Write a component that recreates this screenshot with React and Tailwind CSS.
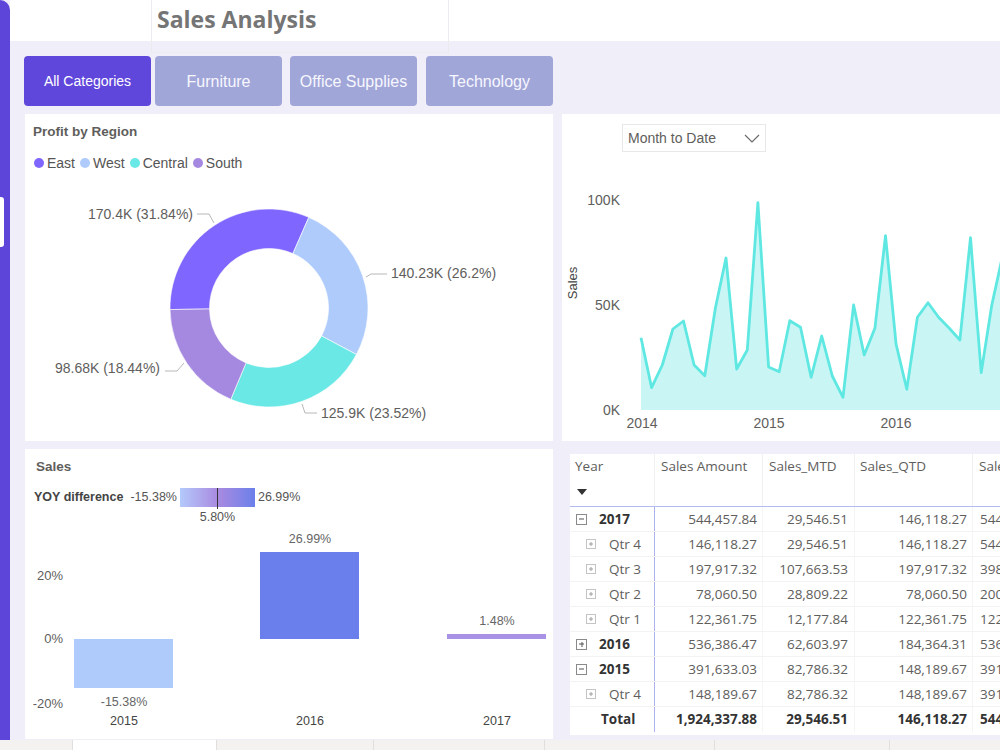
import React from 'react';

// --- chart data (page coordinates are used in every viewBox) ---

const donut = { cx: 269, cy: 308, R: 99, r: 59.5 };

const slices = [
  { name: 'East', from: -90.9, to: 23.7, color: '#7f66fe' },
  { name: 'West', from: 23.7, to: 118, color: '#aecbfc' },
  { name: 'Central', from: 118, to: 202.7, color: '#69e8e6' },
  { name: 'South', from: 202.7, to: 269.1, color: '#a589e0' },
];

const pt = (a, rad) => {
  const t = (a * Math.PI) / 180;
  return [donut.cx + rad * Math.sin(t), donut.cy - rad * Math.cos(t)];
};

const arcPath = (from, to) => {
  const large = to - from > 180 ? 1 : 0;
  const [x1, y1] = pt(from, donut.R);
  const [x2, y2] = pt(to, donut.R);
  const [x3, y3] = pt(to, donut.r);
  const [x4, y4] = pt(from, donut.r);
  return `M${x1} ${y1} A${donut.R} ${donut.R} 0 ${large} 1 ${x2} ${y2} L${x3} ${y3} A${donut.r} ${donut.r} 0 ${large} 0 ${x4} ${y4} Z`;
};

const salesLine = [
  337.7, 387.7, 365, 329, 321, 365, 375.7, 308, 258, 369, 350, 202.7, 367, 371.7, 320.7, 327.3,
  377.3, 336, 376, 397.3, 305, 355, 328.3, 235.7, 344.3, 389.3, 317.3, 302.7, 317.3, 328.3, 340,
  237.7, 372.7, 305, 256.7, 215,
];

const linePts = salesLine.map((y, i) => [641 + i * 10.63, y]);
const lineD = linePts.map(([x, y], i) => `${i ? 'L' : 'M'}${x.toFixed(1)} ${y}`).join(' ');
const areaD = `${lineD} L${linePts[linePts.length - 1][0].toFixed(1)} 410 L641 410 Z`;

const tableRows = [
  { label: '2017', level: 0, open: true, v: ['544,457.84', '29,546.51', '146,118.27', '544,457.84'] },
  { label: 'Qtr 4', level: 1, v: ['146,118.27', '29,546.51', '146,118.27', '544,457.84'] },
  { label: 'Qtr 3', level: 1, v: ['197,917.32', '107,663.53', '197,917.32', '398,339.57'] },
  { label: 'Qtr 2', level: 1, v: ['78,060.50', '28,809.22', '78,060.50', '200,422.25'] },
  { label: 'Qtr 1', level: 1, v: ['122,361.75', '12,177.84', '122,361.75', '122,361.75'] },
  { label: '2016', level: 0, open: false, v: ['536,386.47', '62,603.97', '184,364.31', '536,386.47'] },
  { label: '2015', level: 0, open: true, v: ['391,633.03', '82,786.32', '148,189.67', '391,633.03'] },
  { label: 'Qtr 4', level: 1, v: ['148,189.67', '82,786.32', '148,189.67', '391,633.03'] },
];

function ExpandBox({ open, small }) {
  return (
    <span
      className={`relative inline-block shrink-0 border ${small ? 'w-[10px] h-[10px] border-[#c4c4c4]' : 'w-[11px] h-[11px] border-[#8a8a8a]'}`}
    >
      <span className={`absolute left-[2px] right-[2px] top-1/2 h-px -translate-y-1/2 ${small ? 'bg-[#a0a0a0]' : 'bg-[#555]'}`} />
      {!open && (
        <span className={`absolute top-[2px] bottom-[2px] left-1/2 w-px -translate-x-1/2 ${small ? 'bg-[#a0a0a0]' : 'bg-[#555]'}`} />
      )}
    </span>
  );
}

function ProfitByRegion() {
  return (
    <div className="bg-white flex flex-col h-[327px]">
      <div className="pt-[10px] pl-[8px] text-[13.5px] font-bold text-[#605e5c] leading-[16px]">Profit by Region</div>
      <div className="flex items-center gap-[5px] pl-[9px] mt-[15px] text-[14px] text-[#555] leading-[16px]">
        {slices.map((s) => (
          <span key={s.name} className="flex items-center gap-[3px]">
            <span className="w-[10px] h-[10px] rounded-full" style={{ background: s.color }} />
            {s.name}
          </span>
        ))}
      </div>
      <svg className="mt-auto" width="528" height="261" viewBox="25 180 528 261">
        {slices.map((s) => (
          <path key={s.name} d={arcPath(s.from, s.to)} fill={s.color} stroke="#fff" strokeWidth="0.6" />
        ))}
        <g fill="none" stroke="#b8b8b8" strokeWidth="1">
          <polyline points="197,214 209,214 214,223" />
          <polyline points="366,277 371,274 387,274" />
          <polyline points="165,371 177,371 184,363" />
          <polyline points="302,404 305,413 317,413" />
        </g>
        <g fill="#605e5c" fontSize="14">
          <text x="193" y="219" textAnchor="end">170.4K (31.84%)</text>
          <text x="391" y="278">140.23K (26.2%)</text>
          <text x="160" y="373" textAnchor="end">98.68K (18.44%)</text>
          <text x="321" y="418">125.9K (23.52%)</text>
        </g>
      </svg>
    </div>
  );
}

function SalesTrend() {
  return (
    <div className="bg-white flex flex-col h-[327px] overflow-hidden">
      <div className="pt-[10px] pl-[60px]">
        <div className="w-[144px] h-[28px] border border-[#e8e8e8] flex items-center justify-between pl-[5px] pr-[5px] text-[14px] text-[#605e5c]">
          <span>Month to Date</span>
          <svg width="16" height="9" viewBox="0 0 16 9">
            <path d="M1 1 L8 8 L15 1" fill="none" stroke="#666" strokeWidth="1.1" />
          </svg>
        </div>
      </div>
      <svg className="mt-auto shrink-0" width="438" height="285" viewBox="562 156 438 285">
        <path d={areaD} fill="#c9f6f5" />
        <path d={lineD} fill="none" stroke="#5fe8e2" strokeWidth="2.8" strokeLinejoin="round" />
        <g fill="#605e5c" fontSize="14" textAnchor="end">
          <text x="620" y="205">100K</text>
          <text x="620" y="310">50K</text>
          <text x="620" y="415">0K</text>
        </g>
        <g fill="#605e5c" fontSize="14" textAnchor="middle">
          <text x="642" y="428">2014</text>
          <text x="769" y="428">2015</text>
          <text x="896" y="428">2016</text>
        </g>
        <text x="577" y="283" fontSize="13" fill="#444" textAnchor="middle" transform="rotate(-90 577 283)">Sales</text>
      </svg>
    </div>
  );
}

function YoySales() {
  return (
    <div className="bg-white flex flex-col h-[290px]">
      <div className="pt-[10px] pl-[11px] text-[13.5px] font-bold text-[#605e5c] leading-[16px]">Sales</div>
      <div className="flex items-start pl-[9px] mt-[13px] text-[12.5px] leading-[19px] text-[#444]">
        <span className="font-bold">YOY difference</span>
        <span className="ml-[7px] text-[#555]">-15.38%</span>
        <div className="ml-[3px] flex flex-col items-center">
          <div className="relative w-[75px] h-[19px] bg-linear-to-r from-[#b3cafc] via-[#a98ae0] to-[#6a80ea]">
            <span className="absolute left-[37px] top-0 h-[21px] w-px bg-[#333]" />
          </div>
          <span className="text-[#555] leading-[16px] mt-[2px]">5.80%</span>
        </div>
        <span className="ml-[3px] text-[#555]">26.99%</span>
      </div>
      <svg className="mt-auto shrink-0" width="527" height="214" viewBox="25 525 527 214">
        <rect x="74" y="639" width="99" height="49" fill="#aecbfc" />
        <rect x="260" y="552" width="99" height="87" fill="#6a7fec" />
        <rect x="447" y="634" width="99" height="5" fill="#a992e6" />
        <g fill="#605e5c" fontSize="13" textAnchor="end">
          <text x="63" y="580">20%</text>
          <text x="63" y="643">0%</text>
          <text x="63" y="708">-20%</text>
        </g>
        <g fill="#666" fontSize="12.5" textAnchor="middle">
          <text x="124" y="706">-15.38%</text>
          <text x="310" y="543">26.99%</text>
          <text x="497" y="625">1.48%</text>
        </g>
        <g fill="#444" fontSize="12.5" textAnchor="middle">
          <text x="124" y="725">2015</text>
          <text x="310" y="725">2016</text>
          <text x="497" y="725">2017</text>
        </g>
      </svg>
    </div>
  );
}

function SalesTable() {
  const cols = ['w-[108px]', 'w-[92px]', 'w-[118px]'];
  const pads = ['pr-[5px]', 'pr-[6px]', 'pr-[5px]'];
  return (
    <div className="ml-[8px] mt-[5px] h-[281px] bg-white overflow-hidden font-['Open_Sans',sans-serif] text-[13.5px] text-[#605e5c]">
      <div className="flex h-[53px] border-b border-[#b3bcef]">
        <div className="w-[85px] shrink-0 pl-[5px] pt-[2px] flex flex-col border-r border-[#f0f0f0]">
          <span className="leading-[20px]">Year</span>
          <svg className="mt-[13px] ml-[2px]" width="10" height="6" viewBox="0 0 10 6">
            <path d="M0 0 L10 0 L5 6 Z" fill="#333" />
          </svg>
        </div>
        <div className="w-[108px] shrink-0 pl-[6px] pt-[2px] leading-[20px] border-r border-[#f0f0f0]">Sales Amount</div>
        <div className="w-[92px] shrink-0 pl-[6px] pt-[2px] leading-[20px] border-r border-[#f0f0f0]">Sales_MTD</div>
        <div className="w-[118px] shrink-0 pl-[5px] pt-[2px] leading-[20px] border-r border-[#f0f0f0]">Sales_QTD</div>
        <div className="pl-[6px] pt-[2px] leading-[20px] whitespace-nowrap">Sales_YTD</div>
      </div>
      {[...tableRows, { label: 'Total', total: true, v: ['1,924,337.88', '29,546.51', '146,118.27', '544,457.84'] }].map((row, i) => (
        <div key={i} className={`flex h-[25px] items-center ${row.total ? '' : 'border-b border-[#f3f3f3]'}`}>
          <div className="w-[85px] shrink-0 h-full flex items-center border-r border-[#aab3ee]">
            {row.total ? (
              <span className="pl-[31px] font-bold text-[#333]">Total</span>
            ) : row.level === 0 ? (
              <span className="flex items-center pl-[6px] gap-[12px] font-bold text-[#333]">
                <ExpandBox open={row.open} />
                {row.label}
              </span>
            ) : (
              <span className="flex items-center pl-[16px] gap-[13px]">
                <ExpandBox small />
                {row.label}
              </span>
            )}
          </div>
          {row.v.slice(0, 3).map((val, j) => (
            <div
              key={j}
              className={`${cols[j]} ${pads[j]} shrink-0 h-full flex items-center justify-end border-r border-[#f5f5f5] ${row.total ? 'font-bold text-[#333]' : ''}`}
            >
              {val}
            </div>
          ))}
          <div className={`pl-[7px] whitespace-nowrap ${row.total ? 'font-bold text-[#333]' : ''}`}>{row.v[3]}</div>
        </div>
      ))}
    </div>
  );
}

export default function App() {
  const tabs = [
    { name: 'All Categories', cls: 'ml-[14px] bg-[#5f47dc] text-[14px] text-white' },
    { name: 'Furniture', cls: 'ml-[4px] bg-[#a1a6d8] text-[16px] text-[#f7f7ff]' },
    { name: 'Office Supplies', cls: 'ml-[8px] bg-[#a1a6d8] text-[16px] text-[#f7f7ff]' },
    { name: 'Technology', cls: 'ml-[9px] bg-[#a1a6d8] text-[16px] text-[#f7f7ff]' },
  ];

  return (
    <div className="w-[1000px] h-[750px] overflow-hidden bg-[#f0eff9] flex flex-col font-['Liberation_Sans',Arial,sans-serif]">
      <div className="flex flex-1 min-h-0">
        {/* left nav rail */}
        <div className="w-[10px] shrink-0 bg-[#5d45da] rounded-tr-[10px] flex flex-col">
          <span className="mt-[197px] w-[4px] h-[50px] bg-white rounded-r-[3px]" />
        </div>

        <div className="flex-1 min-w-0 flex flex-col">
          <div className="h-[41px] shrink-0 bg-white flex">
            <div className="ml-[141px] w-[298px] h-[53px] shrink-0 border border-t-0 border-[#ececf0] pl-[5px] relative z-10">
              <span className="block font-['Open_Sans',sans-serif] font-bold text-[23px] leading-[38px] text-[#757575]">
                Sales Analysis
              </span>
            </div>
          </div>

          <div className="flex mt-[15px] h-[50px] shrink-0">
            {tabs.map((t) => (
              <div key={t.name} className={`${t.cls} w-[127px] rounded-[4px] flex items-center justify-center pt-px`}>
                {t.name}
              </div>
            ))}
          </div>

          <div className="mt-[8px] pl-[15px] grid grid-cols-[528px_1fr] grid-rows-[327px_290px] gap-x-[9px] gap-y-[8px]">
            <ProfitByRegion />
            <SalesTrend />
            <YoySales />
            <SalesTable />
          </div>
        </div>
      </div>

      {/* page tabs strip */}
      <div className="h-[10px] shrink-0 bg-[#f3f2f1] flex">
        <div className="w-[73px] border-r border-[#e1dfdd]" />
        <div className="w-[144px] bg-white border-r border-[#e1dfdd]" />
        <div className="w-[157px] border-r border-[#e1dfdd]" />
        <div className="w-[171px] border-r border-[#e1dfdd]" />
        <div className="w-[170px] border-r border-[#e1dfdd]" />
        <div className="w-[175px] border-r border-[#e1dfdd]" />
      </div>
    </div>
  );
}
